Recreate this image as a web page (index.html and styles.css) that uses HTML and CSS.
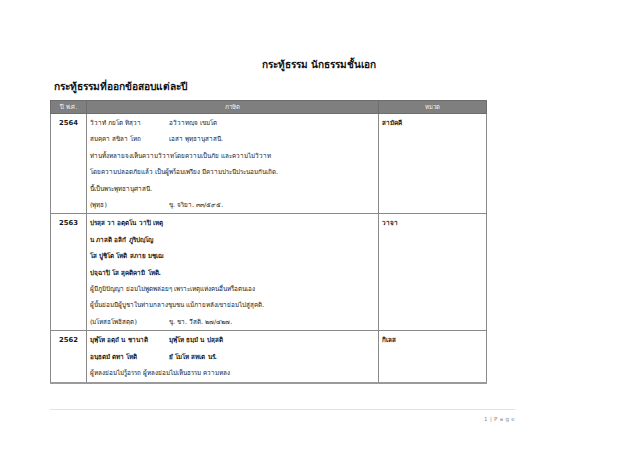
FILE: index.html
```html
<!DOCTYPE html>
<html lang="th">
<head>
<meta charset="utf-8">
<title>กระทู้ธรรม นักธรรมชั้นเอก</title>
<link rel="stylesheet" href="styles.css">
</head>
<body>
<div class="page">
  <h1 class="title">กระทู้ธรรม นักธรรมชั้นเอก</h1>
  <h2 class="subtitle">กระทู้ธรรมที่ออกข้อสอบแต่ละปี</h2>
  <table class="exam">
    <thead>
      <tr>
        <th class="c-year">ปี พ.ศ.</th>
        <th class="c-text">ภาษิต</th>
        <th class="c-cat">หมวด</th>
      </tr>
    </thead>
    <tbody>
      <tr>
        <td class="year">2564</td>
        <td class="text">
          <div class="verse"><span>วิวาทํ ภยโต ทิสฺวา</span><span>อวิวาทญฺจ เขมโต</span></div>
          <div class="verse"><span>สมคฺคา สขิลา โหถ</span><span>เอสา พุทฺธานุสาสนี.</span></div>
          <div class="line">ท่านทั้งหลายจงเห็นความวิวาทโดยความเป็นภัย และความไม่วิวาท</div>
          <div class="line">โดยความปลอดภัยแล้ว เป็นผู้พร้อมเพรียง มีความประนีประนอมกันเถิด.</div>
          <div class="line">นี้เป็นพระพุทธานุศาสนี.</div>
          <div class="verse"><span>(พุทฺธ)</span><span>ขุ. จริยา. ๓๓/๕๙๕.</span></div>
        </td>
        <td class="cat">สามัคคี</td>
      </tr>
      <tr>
        <td class="year">2563</td>
        <td class="text">
          <div class="line pali">ปรสฺส วา อตฺตโน วาปิ เหตุ</div>
          <div class="line pali">น ภาสติ อลิกํ ภูริปญฺโญ</div>
          <div class="line pali">โส ปูชิโต โหติ สภาย มชฺเฌ</div>
          <div class="line pali">ปจฺฉาปิ โส สุคติคามิ โหติ.</div>
          <div class="line">ผู้มีภูมิปัญญา ย่อมไม่พูดพล่อยๆ เพราะเหตุแห่งคนอื่นหรือตนเอง</div>
          <div class="line">ผู้นั้นย่อมมีผู้บูชาในท่ามกลางชุมชน แม้ภายหลังเขาย่อมไปสู่สุคติ.</div>
          <div class="verse"><span>(มโหสธโพธิสตฺต)</span><span>ขุ. ชา. วีสติ. ๒๗/๔๒๗.</span></div>
        </td>
        <td class="cat">วาจา</td>
      </tr>
      <tr>
        <td class="year">2562</td>
        <td class="text">
          <div class="verse bold"><span>มุฬฺโห อตฺถํ น ชานาติ</span><span>มุฬฺโห ธมฺมํ น ปสฺสติ</span></div>
          <div class="verse bold"><span>อนฺธตมํ ตทา โหติ</span><span>ยํ โมโห สหเต นรํ.</span></div>
          <div class="line">ผู้หลงย่อมไม่รู้อรรถ ผู้หลงย่อมไม่เห็นธรรม ความหลง</div>
        </td>
        <td class="cat">กิเลส</td>
      </tr>
    </tbody>
  </table>
  <footer class="footer">
    <span class="pageno">1 | P a g e</span>
  </footer>
</div>
</body>
</html>
```

FILE: styles.css
```css
html, body {
  margin: 0;
  padding: 0;
  background: #ffffff;
}

body {
  font-family: "Tahoma", "DejaVu Sans", "Noto Sans", sans-serif;
  color: #1a1a1a;
}

.page {
  width: 638px;
  height: 451px;
  padding: 57px 0 0 50px;
  box-sizing: border-box;
}

.title {
  margin: 0;
  width: 538px;
  text-align: center;
  font-size: 10px;
  line-height: 16px;
  font-weight: bold;
  color: #111;
}

.subtitle {
  margin: 6px 0 0 4px;
  font-size: 10.2px;
  line-height: 16px;
  font-weight: bold;
  color: #111;
}

.exam {
  margin-top: 5px;
  border-collapse: collapse;
  width: 435px;
  table-layout: fixed;
  font-size: 6.3px;
}

.exam th {
  background: #7f7f7f;
  color: #f2f2f2;
  font-weight: normal;
  height: 12px;
  padding: 0;
  line-height: 12px;
  border: 1px solid #6d6d6d;
  font-size: 6px;
}

.c-year { width: 35px; }
.c-text { width: 291px; }
.c-cat { width: 107px; }

.exam td {
  border: 1px solid #8a8a8a;
  vertical-align: top;
  padding: 1px 3px 0 3px;
  line-height: 16.4px;
}

.exam tbody tr:last-child td {
  border-bottom: 2px solid #9a9a9a;
}

.year {
  text-align: center;
  font-weight: bold;
  font-size: 6.8px;
}

.cat {
  font-weight: bold;
  padding-left: 2px;
}

.verse {
  display: grid;
  grid-template-columns: 79px 1fr;
  white-space: nowrap;
}

.line {
  white-space: nowrap;
}

.pali, .bold {
  font-weight: bold;
}

.footer {
  margin-top: 25px;
  width: 465px;
  border-top: 1px solid #e2e2e2;
  text-align: right;
  padding-top: 2px;
  line-height: 8px;
}

.pageno {
  font-size: 5.5px;
  color: #8a8a8a;
  letter-spacing: 0.3px;
}
```
